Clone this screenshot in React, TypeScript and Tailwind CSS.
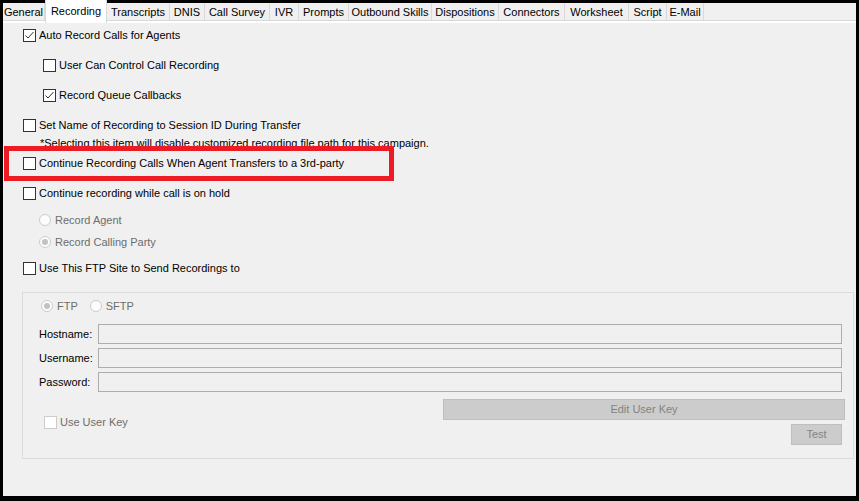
import React from "react";

const tabs = [
  { label: "General", w: "w-[42px]" },
  { label: "Recording", w: "w-[62px]", active: true },
  { label: "Transcripts", w: "w-[63px]" },
  { label: "DNIS", w: "w-[35px]" },
  { label: "Call Survey", w: "w-[65px]" },
  { label: "IVR", w: "w-[29px]" },
  { label: "Prompts", w: "w-[50px]" },
  { label: "Outbound Skills", w: "w-[83px]" },
  { label: "Dispositions", w: "w-[67px]" },
  { label: "Connectors", w: "w-[66px]" },
  { label: "Worksheet", w: "w-[64px]" },
  { label: "Script", w: "w-[38px]" },
  { label: "E-Mail", w: "w-[37px]" },
];

function CheckBox({ checked, disabled }: { checked?: boolean; disabled?: boolean }) {
  return (
    <span
      className={`w-[13px] h-[13px] shrink-0 border flex items-center justify-center ${
        disabled ? "border-[#cccccc] bg-white" : "border-[#333333] bg-white"
      }`}
    >
      {checked && (
        <svg width="11" height="11" viewBox="0 0 11 11">
          <polyline points="1.5,5.5 4,8 9.5,2" fill="none" stroke="#333333" strokeWidth="1" />
        </svg>
      )}
    </span>
  );
}

function Radio({ checked }: { checked?: boolean }) {
  return (
    <span className="w-[12px] h-[12px] shrink-0 rounded-full border border-[#cccccc] bg-[#fcfcfc] flex items-center justify-center">
      {checked && <span className="w-[6px] h-[6px] rounded-full bg-[#c2c2c2]" />}
    </span>
  );
}

function CheckRow({
  label,
  checked,
  className,
}: {
  label: string;
  checked?: boolean;
  className: string;
}) {
  return (
    <div className={`h-[16px] flex items-center gap-[3px] ${className}`}>
      <CheckBox checked={checked} />
      <span className="text-black">{label}</span>
    </div>
  );
}

function Field({ label, className }: { label: string; className?: string }) {
  return (
    <div className={`flex items-center ${className ?? ""}`}>
      <span className="w-[59px] pl-[16px] box-content text-black">{label}</span>
      <div className="w-[744px] h-[20px] border border-[#adadad] bg-[#f0f0f0]" />
    </div>
  );
}

export default function App() {
  return (
    <div
      className="w-[859px] h-[501px] bg-black pt-[3px] pl-[3px] pr-[3px] pb-[5px] text-[11px] leading-none"
      style={{ fontFamily: '"Liberation Sans", Arial, sans-serif' }}
    >
      <div className="h-full bg-[#f0f0f0] flex flex-col relative">
        {/* tab strip */}
        <div className="h-[18px] border-b border-[#d9d9d9] flex items-stretch shrink-0">
          {tabs.map((tab) =>
            tab.active ? (
              <div
                key={tab.label}
                className={`${tab.w} -mt-[3px] h-[23px] bg-white border-x border-[#d9d9d9] flex justify-center pt-[6px] relative z-10`}
              >
                {tab.label}
              </div>
            ) : (
              <div
                key={tab.label}
                className={`${tab.w} border-r border-[#d9d9d9] flex items-center justify-center pt-[1px]`}
              >
                {tab.label}
              </div>
            )
          )}
        </div>
        <div className="h-[2px] bg-white shrink-0" />

        {/* recording options */}
        <div className="flex flex-col relative">
          <CheckRow label="Auto Record Calls for Agents" checked className="mt-[4px] ml-[20px]" />
          <CheckRow label="User Can Control Call Recording" className="mt-[14px] ml-[40px]" />
          <CheckRow label="Record Queue Callbacks" checked className="mt-[14px] ml-[40px]" />
          <CheckRow label="Set Name of Recording to Session ID During Transfer" className="mt-[14px] ml-[20px]" />
          <div className="h-[16px] mt-[2px] ml-[37px] flex items-center text-black">
            *Selecting this item will disable customized recording file path for this campaign.
          </div>
          <CheckRow
            label="Continue Recording Calls When Agent Transfers to a 3rd-party"
            className="mt-[4px] ml-[20px]"
          />
          <CheckRow label="Continue recording while call is on hold" className="mt-[14px] ml-[20px]" />
          <div className="h-[16px] mt-[11px] ml-[36px] flex items-center gap-[4px] text-[#6d6d6d]">
            <Radio />
            <span>Record Agent</span>
          </div>
          <div className="h-[16px] mt-[6px] ml-[36px] flex items-center gap-[4px] text-[#6d6d6d]">
            <Radio checked />
            <span>Record Calling Party</span>
          </div>
          <CheckRow label="Use This FTP Site to Send Recordings to" className="mt-[10px] ml-[20px]" />

          {/* annotation highlight */}
          <div className="absolute left-[1px] top-[123px] w-[390px] h-[35px] border-[5px] border-[#ed1c24] z-20" />

          {/* ftp group */}
          <div className="mt-[16px] ml-[19px] w-[832px] h-[167px] border border-[#dcdcdc] flex flex-col">
            <div className="h-[14px] mt-[6px] flex items-center text-[#6d6d6d]">
              <span className="ml-[18px]">
                <Radio checked />
              </span>
              <span className="ml-[4px]">FTP</span>
              <span className="ml-[12px]">
                <Radio />
              </span>
              <span className="ml-[4px]">SFTP</span>
            </div>
            <Field label="Hostname:" className="mt-[11px]" />
            <Field label="Username:" className="mt-[4px]" />
            <Field label="Password:" className="mt-[4px]" />
            <div className="mt-[7px] flex items-center justify-between pr-[8px]">
              <div className="flex items-center gap-[3px] ml-[21px] text-[#6d6d6d]">
                <CheckBox disabled />
                <span>Use User Key</span>
              </div>
              <div className="w-[402px] flex flex-col items-end">
                <div className="w-full h-[21px] bg-[#cccccc] border border-[#bfbfbf] flex items-center justify-center text-[#838383]">
                  Edit User Key
                </div>
                <div className="w-[51px] h-[21px] mt-[4px] mr-[3px] bg-[#cccccc] border border-[#bfbfbf] flex items-center justify-center text-[#838383]">
                  Test
                </div>
              </div>
            </div>
          </div>
        </div>
      </div>
    </div>
  );
}
